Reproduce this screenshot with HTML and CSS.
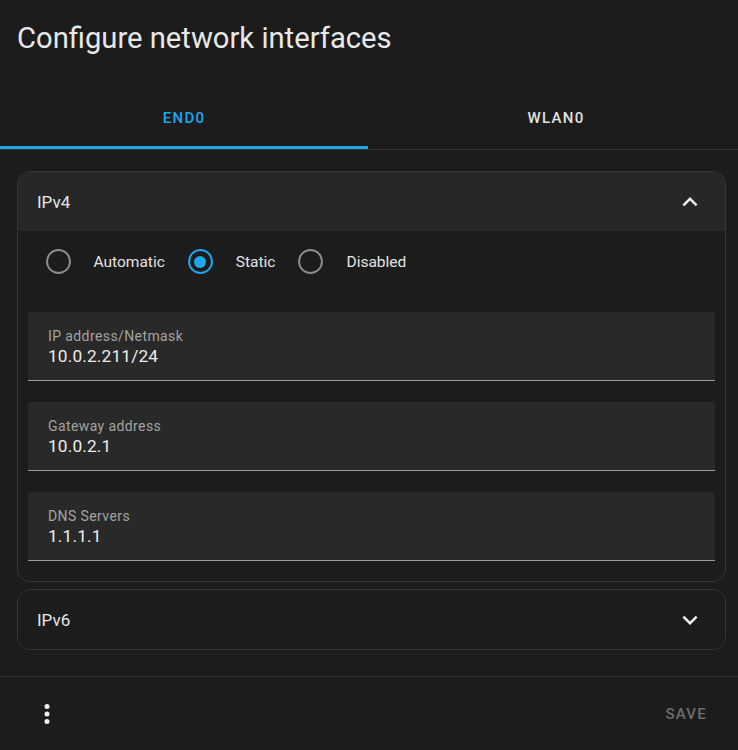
FILE: index.html
```html
<!DOCTYPE html>
<html lang="en">
<head>
<meta charset="utf-8">
<title>Configure network interfaces</title>
<link rel="stylesheet" href="styles.css">
</head>
<body>
<div class="dialog">
  <h1 class="title">Configure network interfaces</h1>
  <div class="tabs">
    <div class="tab active">END0</div>
    <div class="tab second">WLAN0</div>
  </div>
  <div class="content">
    <section class="card">
      <div class="card-header">
        <span class="card-title">IPv4</span>
        <svg class="icon" viewBox="0 0 24 24"><path d="M7.41,15.41L12,10.83L16.59,15.41L18,14L12,8L6,14L7.41,15.41Z"/></svg>
      </div>
      <div class="card-body">
        <div class="radios">
          <label class="radio-item"><span class="radio"></span><span class="radio-label">Automatic</span></label>
          <label class="radio-item"><span class="radio checked"></span><span class="radio-label">Static</span></label>
          <label class="radio-item"><span class="radio"></span><span class="radio-label">Disabled</span></label>
        </div>
        <div class="fields">
          <div class="field">
            <div class="field-label">IP address/Netmask</div>
            <div class="field-value">10.0.2.211/24</div>
          </div>
          <div class="field">
            <div class="field-label">Gateway address</div>
            <div class="field-value">10.0.2.1</div>
          </div>
          <div class="field">
            <div class="field-label">DNS Servers</div>
            <div class="field-value">1.1.1.1</div>
          </div>
        </div>
      </div>
    </section>
    <section class="card collapsed">
      <div class="card-header plain">
        <span class="card-title">IPv6</span>
        <svg class="icon" viewBox="0 0 24 24"><path d="M7.41,8.58L12,13.17L16.59,8.58L18,10L12,16L6,10L7.41,8.58Z"/></svg>
      </div>
    </section>
  </div>
  <div class="footer">
    <svg class="icon dots" viewBox="0 0 24 24"><path d="M12,16A2,2 0 0,1 14,18A2,2 0 0,1 12,20A2,2 0 0,1 10,18A2,2 0 0,1 12,16M12,10A2,2 0 0,1 14,12A2,2 0 0,1 12,14A2,2 0 0,1 10,12A2,2 0 0,1 12,10M12,4A2,2 0 0,1 14,6A2,2 0 0,1 12,8A2,2 0 0,1 10,6A2,2 0 0,1 12,4Z"/></svg>
    <span class="save">SAVE</span>
  </div>
</div>
</body>
</html>
```

FILE: styles.css
```css
html, body {
  margin: 0;
  padding: 0;
  background: #1c1c1c;
}

body {
  font-family: Roboto, "Liberation Sans", sans-serif;
  color: #e1e1e1;
}

.dialog {
  width: 738px;
  height: 750px;
  display: flex;
  flex-direction: column;
  background: #1c1c1c;
}

.title {
  margin: 0;
  padding: 20px 16px 0 17px;
  font-size: 29.2px;
  line-height: 36px;
  font-weight: 400;
  color: #e8e8e8;
}

.tabs {
  margin-top: 34px;
  display: grid;
  grid-template-columns: 368px 1fr;
  border-bottom: 1px solid #333333;
}

.tab {
  height: 56px;
  display: flex;
  align-items: center;
  justify-content: center;
  font-size: 15px;
  font-weight: 500;
  letter-spacing: 1.3px;
  color: #e1e1e1;
  border-bottom: 3px solid transparent;
}

.tab.second {
  padding-left: 6px;
}

.tab.active {
  color: #1ea7ec;
  border-bottom-color: #1ea7ec;
}

.content {
  padding: 21px 12px 0 17px;
  display: flex;
  flex-direction: column;
  gap: 7px;
}

.card {
  border: 1px solid #353535;
  border-radius: 13px;
  overflow: hidden;
}

.card-header {
  height: 59px;
  display: flex;
  align-items: center;
  justify-content: space-between;
  padding: 0 20px 0 19px;
  background: #272727;
}

.card-header.plain {
  background: #1c1c1c;
}

.card-title {
  font-size: 17px;
  font-weight: 400;
  color: #e6e6e6;
}

.icon {
  width: 30px;
  height: 30px;
  fill: #f0f0f0;
  display: block;
}

.card-body {
  padding: 0 10px 20px 10px;
}

.radios {
  display: flex;
  align-items: center;
  gap: 23px;
  padding: 18px 0 18px 17.5px;
}

.radio-item {
  display: flex;
  align-items: center;
}

.radio {
  box-sizing: border-box;
  width: 25px;
  height: 25px;
  border-radius: 50%;
  border: 2.5px solid #8c8c8c;
  display: flex;
  align-items: center;
  justify-content: center;
}

.radio.checked {
  border-color: #1ea7ec;
}

.radio.checked::after {
  content: "";
  width: 12px;
  height: 12px;
  border-radius: 50%;
  background: #1ea7ec;
}

.radio-label {
  margin-left: 23px;
  font-size: 15.5px;
  color: #e3e3e3;
}

.fields {
  padding-top: 20px;
  display: flex;
  flex-direction: column;
  gap: 21px;
}

.field {
  background: #292929;
  border-radius: 4px 4px 0 0;
  border-bottom: 1px solid #9a9a9a;
  padding: 16px 20px 12px 20px;
}

.field-label {
  font-size: 14px;
  line-height: 16px;
  letter-spacing: 0.4px;
  color: #a3a3a3;
}

.field-value {
  font-size: 17.3px;
  line-height: 24px;
  letter-spacing: 0.15px;
  color: #ececec;
}

.card.collapsed {
  margin-bottom: 26px;
}

.footer {
  border-top: 1px solid #303030;
  flex: 1;
  display: flex;
  align-items: center;
  justify-content: space-between;
  padding: 0 31px 0 32px;
}

.save {
  font-size: 15px;
  font-weight: 500;
  letter-spacing: 1.25px;
  color: #6e6e6e;
}
```
